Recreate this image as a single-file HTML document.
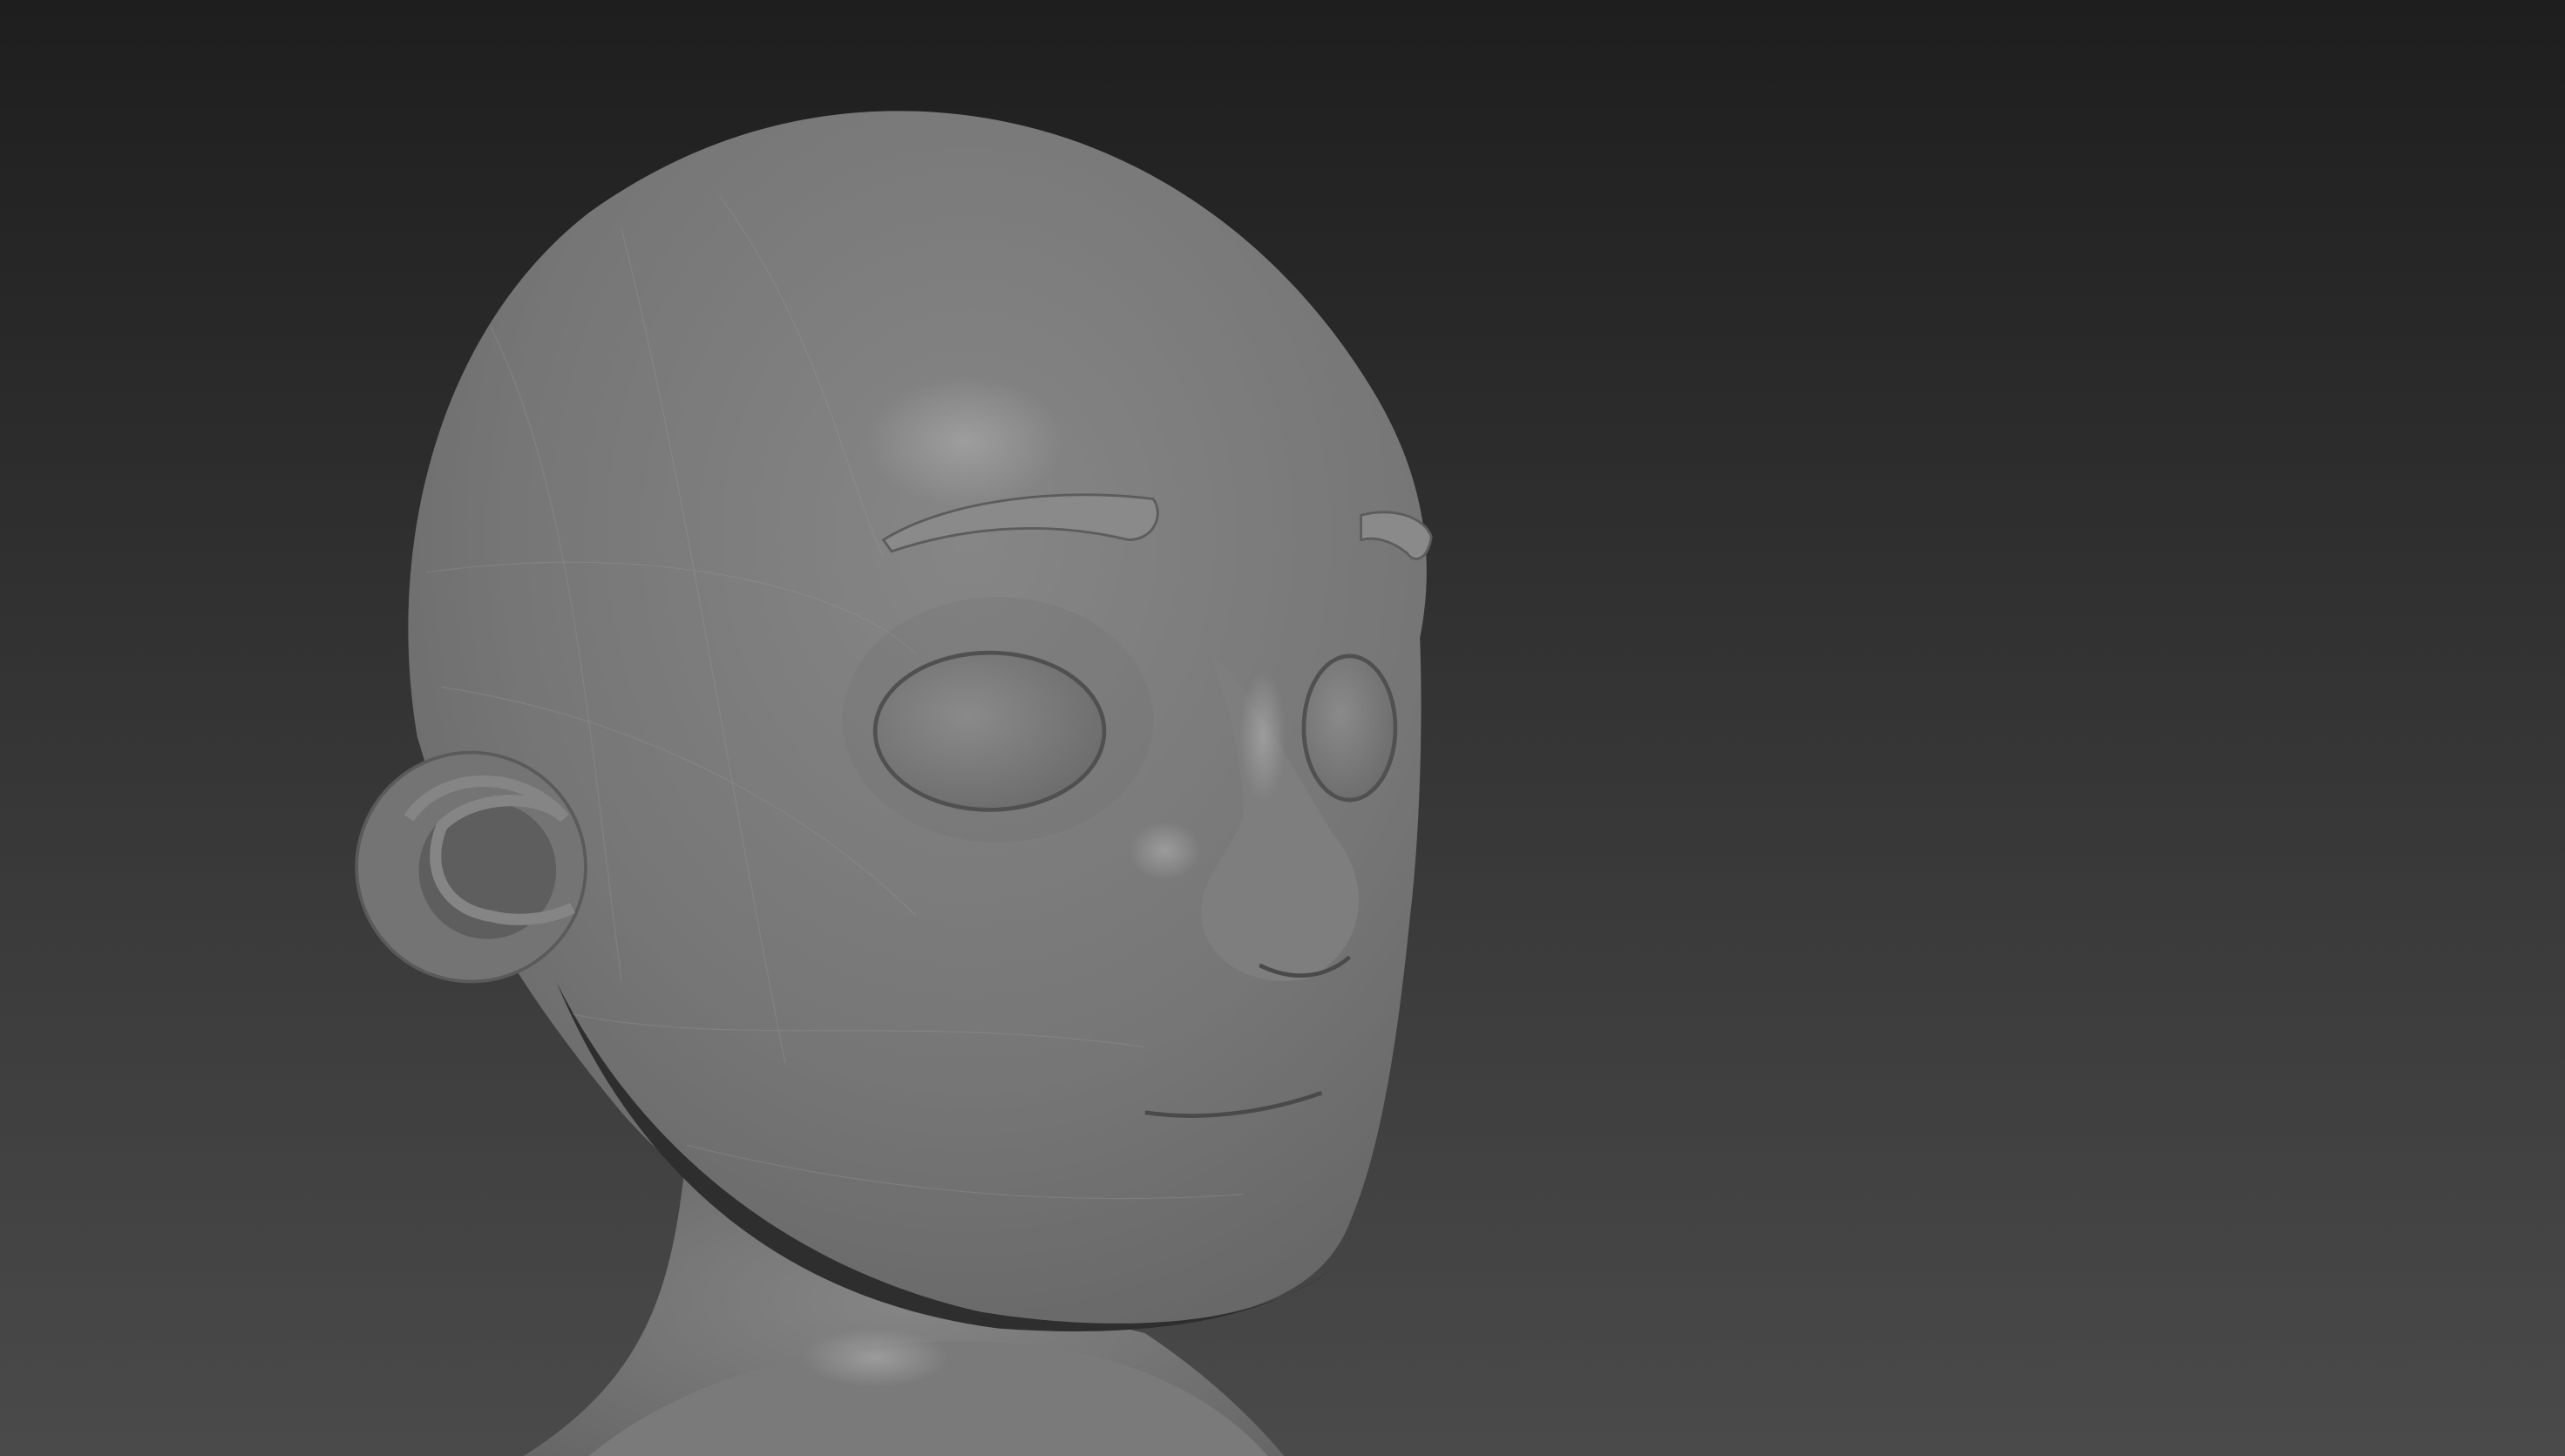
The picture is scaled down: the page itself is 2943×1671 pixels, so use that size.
<!DOCTYPE html>
<html><head><meta charset="utf-8"><style>
html,body{margin:0;padding:0;width:2943px;height:1671px;overflow:hidden;background:#2e2e2e}
svg{display:block}
</style></head><body>
<svg width="2943" height="1671" viewBox="0 0 1568 890" preserveAspectRatio="none" xmlns="http://www.w3.org/2000/svg">
<defs>
<linearGradient id="bg" x1="0" y1="0" x2="0" y2="1">
<stop offset="0" stop-color="#1e1e1e"/><stop offset="0.5" stop-color="#353535"/><stop offset="1" stop-color="#4a4a4a"/>
</linearGradient>
<radialGradient id="head" cx="0.55" cy="0.35" r="0.75">
<stop offset="0" stop-color="#868686"/><stop offset="0.6" stop-color="#767676"/><stop offset="1" stop-color="#646464"/>
</radialGradient>
<radialGradient id="neck" cx="0.5" cy="0.5" r="0.7">
<stop offset="0" stop-color="#858585"/><stop offset="1" stop-color="#666"/>
</radialGradient>
<radialGradient id="eye" cx="0.4" cy="0.4" r="0.7">
<stop offset="0" stop-color="#8a8a8a"/><stop offset="1" stop-color="#6a6a6a"/>
</radialGradient>
<radialGradient id="hl" cx="0.5" cy="0.5" r="0.5">
<stop offset="0" stop-color="#a4a4a4" stop-opacity="0.8"/><stop offset="1" stop-color="#a4a4a4" stop-opacity="0"/>
</radialGradient>
</defs>
<rect width="1568" height="890" fill="url(#bg)"/>
<!-- neck/body -->
<path d="M420 700 C412 780 400 840 320 890 L785 890 C760 860 730 835 700 815 L600 790 Z" fill="url(#neck)"/>
<path d="M360 890 C420 840 510 818 600 820 C680 822 740 850 775 890 Z" fill="#7a7a7a"/>
<ellipse cx="535" cy="830" rx="45" ry="18" fill="url(#hl)"/>
<!-- head -->
<path d="M255 450 C235 330 270 200 360 130 C430 80 500 66 560 68 C680 72 780 140 840 240 C870 290 878 340 868 390 C870 440 868 510 862 560 C855 630 845 700 826 745 C810 790 760 810 680 810 C560 810 450 760 380 680 C330 620 290 560 270 500 Z" fill="url(#head)"/>
<!-- jaw shadow line -->
<path d="M340 600 C390 700 480 775 600 802 C680 815 770 812 815 775 C770 810 690 818 610 812 C480 795 390 720 340 600 Z" fill="#2e2e2e"/>
<!-- forehead highlight -->
<ellipse cx="590" cy="270" rx="60" ry="40" fill="url(#hl)"/>
<!-- eyebrows -->
<path d="M540 330 C580 305 650 298 705 305 C712 315 705 330 690 330 C640 318 590 322 545 337 Z" fill="#8a8a8a" stroke="#5c5c5c" stroke-width="1.5"/>
<path d="M832 315 C850 310 870 315 875 328 C873 342 865 345 860 338 C850 330 840 328 832 330 Z" fill="#8a8a8a" stroke="#5c5c5c" stroke-width="1.5"/>
<!-- eye sockets -->
<ellipse cx="610" cy="440" rx="95" ry="75" fill="#6e6e6e" opacity="0.25"/>
<ellipse cx="605" cy="447" rx="70" ry="48" fill="url(#eye)" stroke="#505050" stroke-width="2.5"/>
<ellipse cx="825" cy="445" rx="28" ry="44" fill="url(#eye)" stroke="#505050" stroke-width="2.5"/>
<!-- nose -->
<path d="M740 400 C765 420 790 470 815 510 C840 540 835 580 800 598 C770 605 740 590 735 565 C730 540 750 525 760 500 C760 460 750 430 740 400 Z" fill="#7e7e7e"/>
<path d="M770 590 C790 600 810 598 825 585" stroke="#4a4a4a" stroke-width="2.5" fill="none"/>
<ellipse cx="772" cy="450" rx="14" ry="40" fill="url(#hl)"/>
<!-- mouth -->
<path d="M700 680 C740 686 780 678 808 668" stroke="#4a4a4a" stroke-width="2.5" fill="none"/>
<!-- cheek highlight -->
<ellipse cx="712" cy="520" rx="22" ry="18" fill="url(#hl)"/>
<!-- ear -->
<circle cx="288" cy="530" r="70" fill="#747474" stroke="#5a5a5a" stroke-width="2"/>
<circle cx="298" cy="532" r="42" fill="#5e5e5e"/>
<path d="M250 500 C270 470 320 470 345 500 C330 485 290 485 270 505 C260 530 270 555 300 560 C320 565 340 560 350 555" fill="none" stroke="#858585" stroke-width="7"/>
<!-- faint wireframe lines -->
<g stroke="#9a9a9a" stroke-width="0.6" fill="none" opacity="0.35">
<path d="M300 200 C350 300 360 450 380 600"/>
<path d="M380 140 C420 300 440 450 480 650"/>
<path d="M260 350 C400 330 520 360 560 400"/>
<path d="M270 420 C400 440 500 500 560 560"/>
<path d="M350 620 C450 640 560 620 700 640"/>
<path d="M420 700 C500 720 620 740 760 730"/>
<path d="M440 120 C500 200 520 300 540 340"/>
</g>
</svg>
</body></html>
